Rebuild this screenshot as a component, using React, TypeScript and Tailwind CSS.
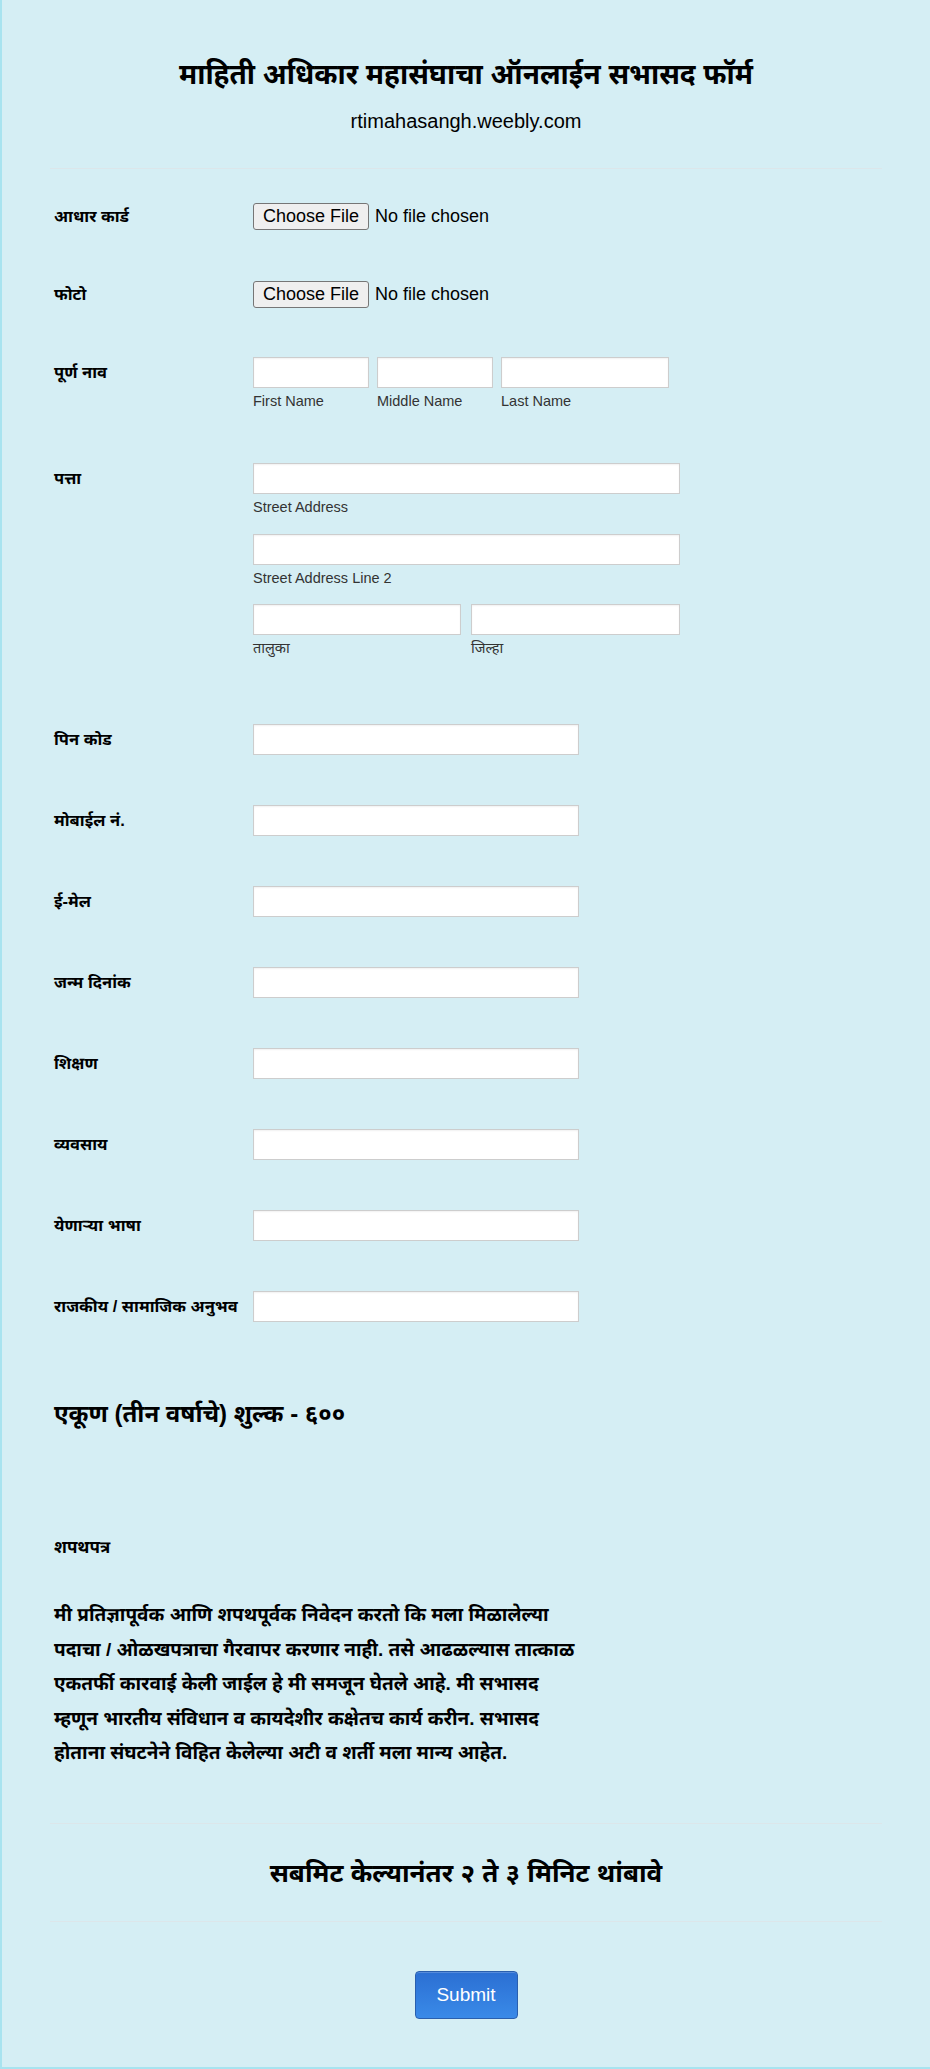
import React from "react";

const dev = "font-['Liberation_Sans','Noto_Sans_Devanagari','Lohit_Devanagari','Noto_Sans',sans-serif]";

function Label({ children }: { children: React.ReactNode }) {
  return (
    <div className="w-[199px] shrink-0 h-[31px] flex items-center text-[16.5px] font-bold text-black whitespace-nowrap">
      {children}
    </div>
  );
}

function Field({ w, sub }: { w: string; sub?: string }) {
  return (
    <div className="flex flex-col">
      <div className={`${w} h-[31px] bg-white border border-[#cdcdcd] shadow-[inset_0_1px_2px_rgba(0,0,0,0.06)]`} />
      {sub && <div className="text-[14.5px] leading-[20px] mt-[3px] text-[#333]">{sub}</div>}
    </div>
  );
}

function FileRow({ label, mt }: { label: string; mt: string }) {
  return (
    <div className={`flex ${mt}`}>
      <div className="w-[199px] shrink-0 h-[27px] flex items-center text-[16.5px] font-bold">{label}</div>
      <div className="flex items-center h-[27px]">
        <div className="h-[27px] px-[9px] flex items-center bg-[#efefef] border border-[#767676] rounded-[3px] text-[18px] text-black">
          Choose File
        </div>
        <span className="ml-[6px] text-[18px] text-black">No file chosen</span>
      </div>
    </div>
  );
}

function SingleRow({ label, mt }: { label: string; mt: string }) {
  return (
    <div className={`flex ${mt}`}>
      <Label>{label}</Label>
      <Field w="w-[326px]" />
    </div>
  );
}

export default function App() {
  return (
    <div className={`${dev} w-full h-[2069px] bg-[#d5eef4] border-l-2 border-b-2 border-[#a8e3ef] text-black overflow-hidden`}>
      {/* Header */}
      <div className="pt-[57px] flex flex-col items-center">
        <h1 className="text-[28px] leading-[36px] font-bold">माहिती अधिकार महासंघाचा ऑनलाईन सभासद फॉर्म</h1>
        <div className="mt-[16px] text-[20px] leading-[24px] font-['Liberation_Sans',sans-serif]">rtimahasangh.weebly.com</div>
      </div>
      <div className="mx-[48px] mt-[35px] h-[1px] bg-[#dce6ea]" />

      <div className="pl-[52px]">
        <FileRow label="आधार कार्ड" mt="mt-[34px]" />
        <FileRow label="फोटो" mt="mt-[51px]" />

        <div className="flex mt-[49px]">
          <Label>पूर्ण नाव</Label>
          <div className="flex gap-[8px]">
            <Field w="w-[116px]" sub="First Name" />
            <Field w="w-[116px]" sub="Middle Name" />
            <Field w="w-[168px]" sub="Last Name" />
          </div>
        </div>

        <div className="flex mt-[52px]">
          <Label>पत्ता</Label>
          <div className="flex flex-col w-[427px]">
            <Field w="w-[427px]" sub="Street Address" />
            <div className="mt-[17px]">
              <Field w="w-[427px]" sub="Street Address Line 2" />
            </div>
            <div className="mt-[16px] flex gap-[10px]">
              <Field w="w-[208px]" sub="तालुका" />
              <Field w="w-[209px]" sub="जिल्हा" />
            </div>
          </div>
        </div>

        <SingleRow label="पिन कोड" mt="mt-[66px]" />
        <SingleRow label="मोबाईल नं." mt="mt-[50px]" />
        <SingleRow label="ई-मेल" mt="mt-[50px]" />
        <SingleRow label="जन्म दिनांक" mt="mt-[50px]" />
        <SingleRow label="शिक्षण" mt="mt-[50px]" />
        <SingleRow label="व्यवसाय" mt="mt-[50px]" />
        <SingleRow label="येणाऱ्या भाषा" mt="mt-[50px]" />
        <SingleRow label="राजकीय / सामाजिक अनुभव" mt="mt-[50px]" />

        <div className="mt-[76px] text-[24px] leading-[32px] font-bold">एकूण (तीन वर्षाचे) शुल्क - ६००</div>

        <div className="mt-[106px] text-[17px] leading-[24px] font-bold">शपथपत्र</div>

        <p className="mt-[38px] text-[19px] leading-[34.6px] font-bold whitespace-nowrap">
          मी प्रतिज्ञापूर्वक आणि शपथपूर्वक निवेदन करतो कि मला मिळालेल्या
          <br />
          पदाचा / ओळखपत्राचा गैरवापर करणार नाही. तसे आढळल्यास तात्काळ
          <br />
          एकतर्फी कारवाई केली जाईल हे मी समजून घेतले आहे. मी सभासद
          <br />
          म्हणून भारतीय संविधान व कायदेशीर कक्षेतच कार्य करीन. सभासद
          <br />
          होताना संघटनेने विहित केलेल्या अटी व शर्ती मला मान्य आहेत.
        </p>
      </div>

      <div className="mx-[48px] mt-[52px] h-[1px] bg-[#dce6ea]" />
      <div className="mt-[32px] text-center text-[26px] leading-[34px] font-bold">सबमिट केल्यानंतर २ ते ३ मिनिट थांबावे</div>
      <div className="mx-[48px] mt-[31px] h-[1px] bg-[#dce6ea]" />

      <div className="flex justify-center mt-[49px]">
        <button className="w-[103px] h-[48px] rounded-[4px] border border-[#2a5fae] bg-gradient-to-b from-[#2b6fd3] to-[#3a8ae8] text-white text-[19px] font-['Liberation_Sans',sans-serif] shadow-[inset_0_1px_0_rgba(255,255,255,0.2)]">
          Submit
        </button>
      </div>
    </div>
  );
}
